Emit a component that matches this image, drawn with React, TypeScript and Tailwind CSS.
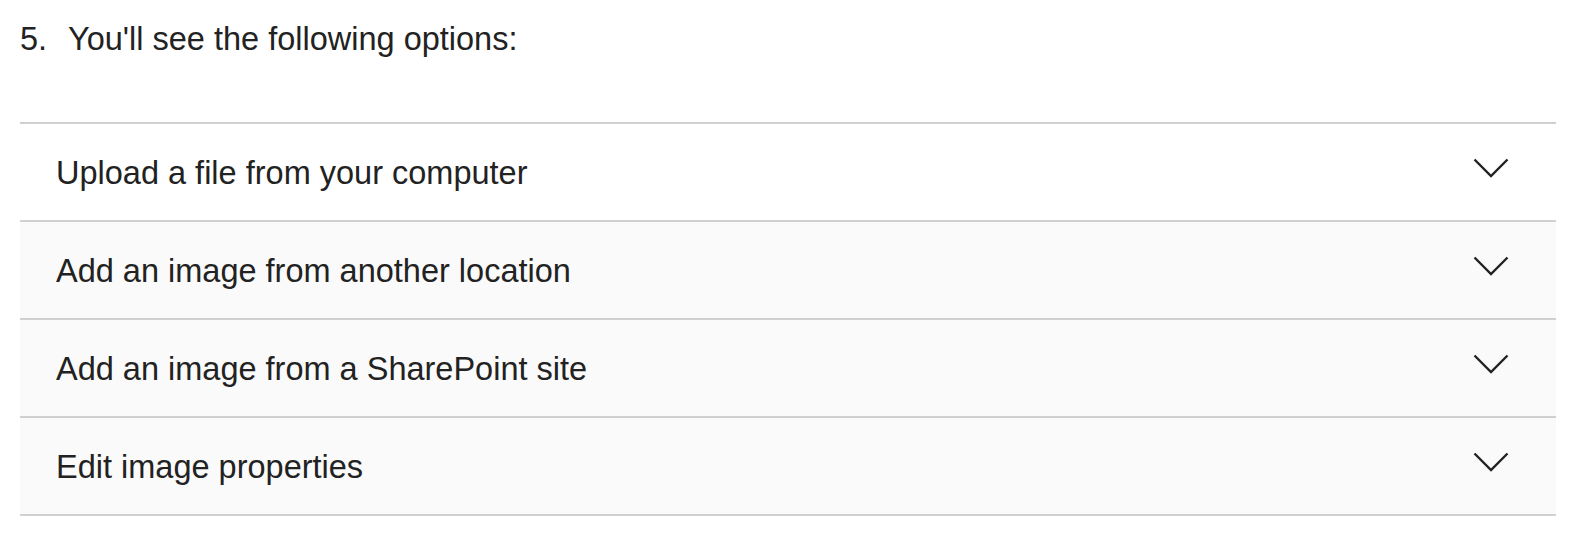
const options = [
  'Upload a file from your computer',
  'Add an image from another location',
  'Add an image from a SharePoint site',
  'Edit image properties',
];

function Chevron() {
  return (
    <svg width="36" height="20" viewBox="0 0 36 20" fill="none" className="mb-2 shrink-0">
      <polyline points="1.5,1.5 18,18 34.5,1.5" stroke="#222" strokeWidth="2.4" />
    </svg>
  );
}

export default function App() {
  return (
    <div className="w-[1580px] h-[552px] bg-white text-[#222] font-['Liberation_Sans',Arial,sans-serif] pt-[21px] pl-[20px] pr-[24px]">
      <p className="flex text-[32.5px] leading-[37px]">
        <span className="w-[48px]">5.</span>
        <span>You'll see the following options:</span>
      </p>
      <div className="mt-[64px] border-b-2 border-[#d0d0d0]">
        {options.map((label, i) => (
          <div
            key={label}
            className={`flex items-center justify-between h-[98px] border-t-2 border-[#d0d0d0] pl-[36px] pr-[47px] ${
              i === 0 ? 'bg-white' : 'bg-[#fafafa]'
            }`}
          >
            <span className="text-[32.5px] leading-[37px] pt-[2px]">{label}</span>
            <Chevron />
          </div>
        ))}
      </div>
    </div>
  );
}
